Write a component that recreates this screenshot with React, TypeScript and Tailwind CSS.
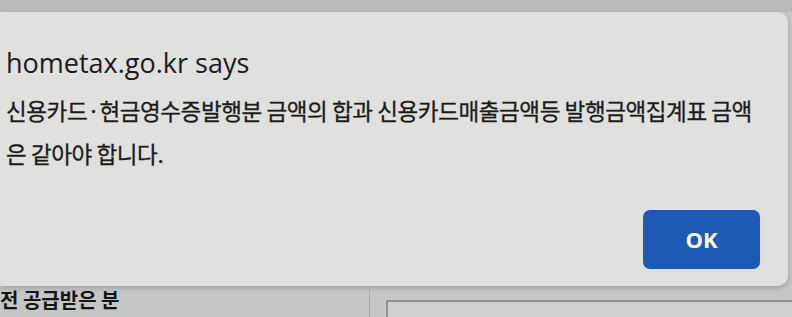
const App = () => {
  return (
    <div className="w-[792px] h-[317px] overflow-hidden bg-[#c4c7c6] flex flex-col font-['Noto_Sans_CJK_KR',sans-serif]">
      <div className="h-[12px] bg-[#b8bbba] shrink-0"></div>
      <div className="w-[788px] h-[274px] shrink-0 bg-[#e0e0de] rounded-tr-[10px] rounded-br-[10px] shadow-[0_2px_5px_rgba(0,0,0,0.2)] flex flex-col pl-[6px] pr-[28px] pt-[35px]">
        <h1 className="text-[27px] leading-[32px] text-[#1b1b1b] font-['Open_Sans','Noto_Sans_CJK_KR',sans-serif]">
          hometax.go.kr says
        </h1>
        <p className="mt-[10px] text-[22.5px] leading-[43px] text-[#1b1b1b] tracking-[-0.4px] whitespace-nowrap [-webkit-text-stroke:0.3px_#1b1b1b]">
          신용카드·현금영수증발행분 금액의 합과 신용카드매출금액등 발행금액집계표 금액
          <br />
          은 같아야 합니다.
        </p>
        <div className="flex justify-end mt-[35px]">
          <button className="w-[117px] h-[59px] rounded-[7px] bg-[#1b5bb4] text-white text-[22px] font-bold font-['Open_Sans',sans-serif]">
            OK
          </button>
        </div>
      </div>
      <div className="flex items-start">
        <div className="w-[370px] border-r border-[#a9acab] h-[40px] pt-[2px]">
          <div className="text-[20px] leading-[24px] font-bold text-[#151515]">전 공급받은 분</div>
        </div>
        <div className="ml-[16px] mt-[14px] flex-1 h-[30px] border-t-2 border-l-2 border-[#8e9291] bg-[#cdd0cf]"></div>
      </div>
    </div>
  );
};

export default App;
